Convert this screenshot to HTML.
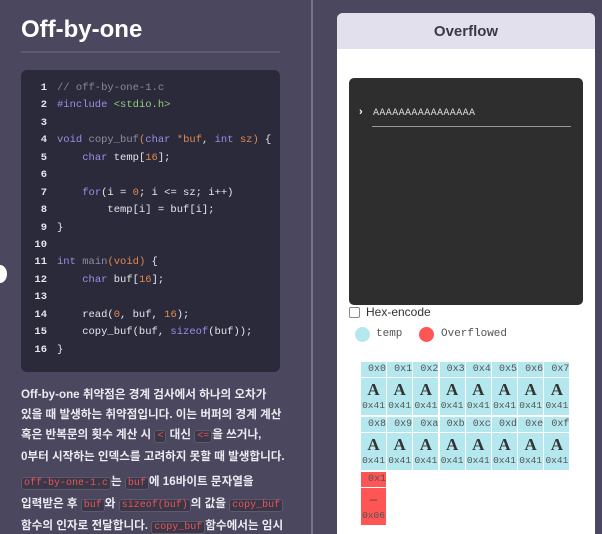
<!DOCTYPE html>
<html><head><meta charset="utf-8"><style>
*{margin:0;padding:0;box-sizing:border-box}
html,body{width:602px;height:534px;overflow:hidden}
body{background:#4a475e;position:relative;font-family:"Liberation Sans","Noto Sans CJK KR",sans-serif}
.title{position:absolute;left:21px;top:16px;font-size:24px;font-weight:bold;color:#fff}
.hr{position:absolute;left:21px;top:51px;width:259px;height:2px;background:#5d5a70}
.code{position:absolute;left:21px;top:70px;width:259px;height:302px;background:#2b2a3a;border-radius:6px}
.ln{position:absolute;font-family:"Liberation Mono",monospace;font-size:10.5px;color:#e6e6ee;white-space:pre}
.n{position:absolute;width:26px;text-align:right;left:21px;font-weight:bold}
.c{left:57px}
.cm{color:#8a8898}.kw{color:#9a8ee8}.str{color:#8fd07a}.or{color:#e08a4c}.fn{color:#908aa0}
.vline{position:absolute;left:311px;top:0;width:2px;height:534px;background:#77748a}
.dot{position:absolute;left:-7px;top:265px;width:14px;height:18px;border-radius:50%;background:#fff}
.p{position:absolute;left:21px;font-size:11.6px;font-weight:bold;color:#ecebf2;line-height:20px;white-space:nowrap}
.ic{font-family:"Liberation Mono",monospace;font-size:10px;color:#e8545a;background:#3a3748;border:1px solid #5e5a6e;border-radius:3px;padding:0 2px;font-weight:normal}
.card{position:absolute;left:337px;top:13px;width:258px;height:530px;background:#fff;border-radius:6px;overflow:hidden}
.head{height:36px;background:#e1e0ec;text-align:center;line-height:37px;font-size:15px;font-weight:bold;color:#3a3a44}
.term{position:absolute;left:12px;top:65px;width:234px;height:227px;background:#2e2e2e;border-radius:5px}
.cell{position:absolute;background:#b5e8ee;font-family:"Liberation Mono",monospace;color:#555;text-align:center}
</style></head><body>
<div class="title">Off-by-one</div>
<div class="hr"></div>
<div class="code"></div>
<div class="ln n" style="top:82px">1</div><div class="ln c cm" style="top:82px">// off-by-one-1.c</div>
<div class="ln n" style="top:99px">2</div><div class="ln c" style="top:99px"><span class="kw">#include</span> <span class="str">&lt;stdio.h&gt;</span></div>
<div class="ln n" style="top:117px">3</div>
<div class="ln n" style="top:134px">4</div><div class="ln c" style="top:134px"><span class="kw">void</span> <span class="fn">copy_buf</span><span class="or">(</span><span class="kw">char</span> <span class="or">*buf</span>, <span class="kw">int</span> <span class="or">sz)</span> {</div>
<div class="ln n" style="top:152px">5</div><div class="ln c" style="top:152px">    <span class="kw">char</span> temp[<span class="or">16</span>];</div>
<div class="ln n" style="top:169px">6</div>
<div class="ln n" style="top:187px">7</div><div class="ln c" style="top:187px">    <span class="kw">for</span>(i = <span class="or">0</span>; i &lt;= sz; i++)</div>
<div class="ln n" style="top:204px">8</div><div class="ln c" style="top:204px">        temp[i] = buf[i];</div>
<div class="ln n" style="top:222px">9</div><div class="ln c" style="top:222px">}</div>
<div class="ln n" style="top:239px">10</div>
<div class="ln n" style="top:256px">11</div><div class="ln c" style="top:256px"><span class="kw">int</span> <span class="fn">main</span><span class="or">(void)</span> {</div>
<div class="ln n" style="top:274px">12</div><div class="ln c" style="top:274px">    <span class="kw">char</span> buf[<span class="or">16</span>];</div>
<div class="ln n" style="top:291px">13</div>
<div class="ln n" style="top:309px">14</div><div class="ln c" style="top:309px">    read(<span class="or">0</span>, buf, <span class="or">16</span>);</div>
<div class="ln n" style="top:326px">15</div><div class="ln c" style="top:326px">    copy_buf(buf, <span class="kw">sizeof</span>(buf));</div>
<div class="ln n" style="top:344px">16</div><div class="ln c" style="top:344px">}</div>
<div class="dot"></div>
<div class="p" style="top:385px">Off-by-one 취약점은 경계 검사에서 하나의 오차가<br>있을 때 발생하는 취약점입니다. 이는 버퍼의 경계 계산<br>혹은 반복문의 횟수 계산 시 <span class="ic">&lt;</span> 대신 <span class="ic">&lt;=</span>을 쓰거나,<br>0부터 시작하는 인덱스를 고려하지 못할 때 발생합니다.</div>
<div class="p" style="top:472px"><span class="ic">off-by-one-1.c</span>는 <span class="ic">buf</span>에 16바이트 문자열을<br>입력받은 후 <span class="ic">buf</span>와 <span class="ic">sizeof(buf)</span>의 값을 <span class="ic">copy_buf</span><br>함수의 인자로 전달합니다. <span class="ic">copy_buf</span>함수에서는 임시</div>
<div class="vline"></div>
<div class="card">
<div class="head">Overflow</div>
<div class="term">
<div style="position:absolute;left:10px;top:28px;color:#fff;font-size:11px;font-weight:bold">›</div>
<div style="position:absolute;left:24px;top:30px;color:#ddd;font-size:10px;font-family:'Liberation Mono',monospace;letter-spacing:0.4px">AAAAAAAAAAAAAAAA</div>
<div style="position:absolute;left:23px;top:48px;width:199px;height:1px;background:#999"></div>
</div>
<div style="position:absolute;left:12px;top:294px;width:11px;height:11px;border:1px solid #888;border-radius:2px"></div>
<div style="position:absolute;left:29px;top:292px;font-size:12px;color:#333">Hex-encode</div>
<div style="position:absolute;left:18px;top:314px;width:15px;height:15px;border-radius:50%;background:#b5e8ee"></div>
<div style="position:absolute;left:39px;top:315px;font-size:11px;color:#555;font-family:'Liberation Mono',monospace">temp</div>
<div style="position:absolute;left:82px;top:314px;width:15px;height:15px;border-radius:50%;background:#f55"></div>
<div style="position:absolute;left:104px;top:315px;font-size:11px;color:#555;font-family:'Liberation Mono',monospace">Overflowed</div>
<div id="tbl"></div>
</div>
<script>
var t=document.getElementById('tbl'),h='';
var hx='0123456789abcdef';
for(var r=0;r<2;r++)for(var i=0;i<8;i++){
var x=24+i*26.2,y=349+r*55;
h+='<div class="cell" style="left:'+x+'px;top:'+y+'px;width:25px;height:15px;font-size:10px;line-height:15px;text-align:right;padding-right:0">0x'+hx[r*8+i]+'</div>';
h+='<div class="cell" style="left:'+x+'px;top:'+(y+16)+'px;width:25px;height:37px"><div style="font-size:17px;font-weight:bold;color:#333;line-height:20px;margin-top:2px;font-family:\'Liberation Serif\',serif">A</div><div style="font-size:9.5px;line-height:12px">0x41</div></div>';
}
h+='<div class="cell" style="background:#f55;left:24px;top:459px;width:25px;height:15px;font-size:10px;line-height:15px;text-align:right">0x1</div>';
h+='<div class="cell" style="background:#f55;left:24px;top:475px;width:25px;height:37px"><div style="font-size:12px;line-height:20px;margin-top:2px;color:#444">—</div><div style="font-size:9.5px;line-height:12px">0x06</div></div>';
t.innerHTML=h;
</script>
</body></html>
